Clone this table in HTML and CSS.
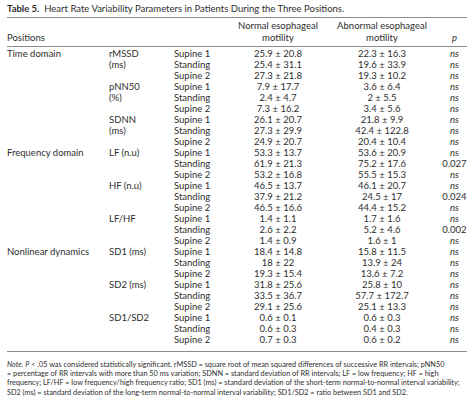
FILE: index.html
```html
<!DOCTYPE html>
<html>
<head>
<meta charset="utf-8">
<link rel="stylesheet" href="styles.css">
</head>
<body>
<div class="page">
  <div class="title"><b>Table 5.</b>&nbsp; Heart Rate Variability Parameters in Patients During the Three Positions.</div>
  <div class="head">
    <div class="h-pos">Positions</div>
    <div class="h-col">Normal esophageal<br>motility</div>
    <div class="h-col">Abnormal esophageal<br>motility</div>
    <div class="h-p"><i>p</i></div>
  </div>
  <div class="grid">
    <div class="dom">Time domain</div>
    <div class="par">rMSSD<br>(ms)</div>
    <div>Supine 1</div><div class="c">25.9 ± 20.8</div><div class="c">22.3 ± 16.3</div><div class="p"><i>ns</i></div>
    <div>Standing</div><div class="c">25.4 ± 31.1</div><div class="c">19.6 ± 33.9</div><div class="p"><i>ns</i></div>
    <div>Supine 2</div><div class="c">27.3 ± 21.8</div><div class="c">19.3 ± 10.2</div><div class="p"><i>ns</i></div>
    <div class="par">pNN50<br>(%)</div>
    <div>Supine 1</div><div class="c">7.9 ± 17.7</div><div class="c">3.6 ± 6.4</div><div class="p"><i>ns</i></div>
    <div>Standing</div><div class="c">2.4 ± 4.7</div><div class="c">2 ± 5.5</div><div class="p"><i>ns</i></div>
    <div>Supine 2</div><div class="c">7.3 ± 16.2</div><div class="c">3.4 ± 5.6</div><div class="p"><i>ns</i></div>
    <div class="par">SDNN<br>(ms)</div>
    <div>Supine 1</div><div class="c">26.1 ± 20.7</div><div class="c">21.8 ± 9.9</div><div class="p"><i>ns</i></div>
    <div>Standing</div><div class="c">27.3 ± 29.9</div><div class="c">42.4 ± 122.8</div><div class="p"><i>ns</i></div>
    <div>Supine 2</div><div class="c">24.9 ± 20.7</div><div class="c">20.4 ± 10.4</div><div class="p"><i>ns</i></div>

    <div class="dom">Frequency domain</div>
    <div class="par">LF (n.u)</div>
    <div>Supine 1</div><div class="c">53.3 ± 13.7</div><div class="c">53.6 ± 20.9</div><div class="p"><i>ns</i></div>
    <div>Standing</div><div class="c">61.9 ± 21.3</div><div class="c">75.2 ± 17.6</div><div class="p">0.027</div>
    <div>Supine 2</div><div class="c">53.2 ± 16.8</div><div class="c">55.5 ± 15.3</div><div class="p"><i>ns</i></div>
    <div class="par">HF (n.u)</div>
    <div>Supine 1</div><div class="c">46.5 ± 13.7</div><div class="c">46.1 ± 20.7</div><div class="p"><i>ns</i></div>
    <div>Standing</div><div class="c">37.9 ± 21.2</div><div class="c">24.5 ± 17</div><div class="p">0.024</div>
    <div>Supine 2</div><div class="c">46.5 ± 16.6</div><div class="c">44.4 ± 15.2</div><div class="p"><i>ns</i></div>
    <div class="par">LF/HF</div>
    <div>Supine 1</div><div class="c">1.4 ± 1.1</div><div class="c">1.7 ± 1.6</div><div class="p"><i>ns</i></div>
    <div>Standing</div><div class="c">2.6 ± 2.2</div><div class="c">5.2 ± 4.6</div><div class="p">0.002</div>
    <div>Supine 2</div><div class="c">1.4 ± 0.9</div><div class="c">1.6 ± 1</div><div class="p"><i>ns</i></div>

    <div class="dom">Nonlinear dynamics</div>
    <div class="par">SD1 (ms)</div>
    <div>Supine 1</div><div class="c">18.4 ± 14.8</div><div class="c">15.8 ± 11.5</div><div class="p"><i>ns</i></div>
    <div>Standing</div><div class="c">18 ± 22</div><div class="c">13.9 ± 24</div><div class="p"><i>ns</i></div>
    <div>Supine 2</div><div class="c">19.3 ± 15.4</div><div class="c">13.6 ± 7.2</div><div class="p"><i>ns</i></div>
    <div class="par">SD2 (ms)</div>
    <div>Supine 1</div><div class="c">31.8 ± 25.6</div><div class="c">25.8 ± 10</div><div class="p"><i>ns</i></div>
    <div>Standing</div><div class="c">33.5 ± 36.7</div><div class="c">57.7 ± 172.7</div><div class="p"><i>ns</i></div>
    <div>Supine 2</div><div class="c">29.1 ± 25.6</div><div class="c">25.1 ± 13.3</div><div class="p"><i>ns</i></div>
    <div class="par">SD1/SD2</div>
    <div>Supine 1</div><div class="c">0.6 ± 0.1</div><div class="c">0.6 ± 0.3</div><div class="p"><i>ns</i></div>
    <div>Standing</div><div class="c">0.6 ± 0.3</div><div class="c">0.4 ± 0.3</div><div class="p"><i>ns</i></div>
    <div>Supine 2</div><div class="c">0.7 ± 0.3</div><div class="c">0.6 ± 0.2</div><div class="p"><i>ns</i></div>
  </div>
  <div class="note">
    <div class="nl"><i>Note. P</i> &lt; .05 was considered statistically significant. rMSSD = square root of mean squared differences of successive RR intervals; pNN50</div>
    <div class="nl">= percentage of RR intervals with more than 50 ms variation; SDNN = standard deviation of RR intervals; LF = low frequency; HF = high</div>
    <div class="nl">frequency; LF/HF = low frequency/high frequency ratio; SD1 (ms) = standard deviation of the short-term normal-to-normal interval variability;</div>
    <div class="nl">SD2 (ms) = standard deviation of the long-term normal-to-normal interval variability; SD1/SD2 = ratio between SD1 and SD2.</div>
  </div>
</div>
</body>
</html>
```

FILE: styles.css
```css
html, body {
  margin: 0;
  padding: 0;
  background: #fff;
}
.page {
  width: 460px;
  padding: 3px 7px 0 7px;
  font-family: Lato, "Open Sans", sans-serif;
  font-size: 9.5px;
  color: #2e2e2e;
}
.title {
  line-height: 11px;
  height: 11px;
  padding-bottom: 2.5px;
  border-bottom: 1.5px solid #8c8c8c;
  white-space: nowrap;
}
.title b {
  font-weight: 700;
}
.head {
  display: grid;
  grid-template-columns: 223px 96px 112px 29px;
  align-items: end;
  line-height: 12px;
  padding: 2px 0 2px 0;
  border-bottom: 1.5px solid #8c8c8c;
}
.h-col {
  text-align: center;
}
.h-p {
  text-align: center;
  padding-left: 4px;
}
.grid {
  display: grid;
  grid-template-columns: 102px 65px 56px 96px 112px 29px;
  grid-auto-rows: 11px;
  line-height: 11px;
  padding: 1px 0 6px 0;
  border-bottom: 1.5px solid #8c8c8c;
  white-space: nowrap;
}
.dom {
  grid-column: 1;
  grid-row: span 9;
}
.par {
  grid-column: 2;
  grid-row: span 3;
}
.c {
  text-align: center;
}
.p {
  text-align: center;
  padding-left: 4px;
}
.note {
  padding-top: 8px;
  font-size: 7.3px;
  line-height: 9.4px;
}
.nl {
  white-space: nowrap;
}
```
